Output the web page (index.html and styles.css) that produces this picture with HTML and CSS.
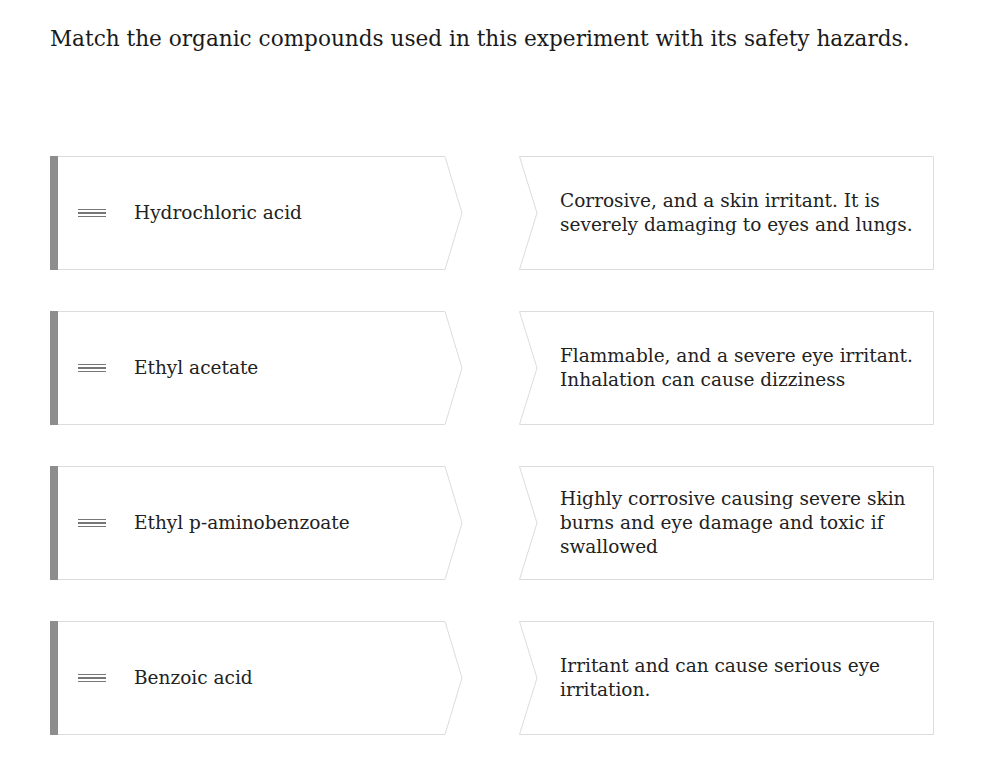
FILE: index.html
```html
<!DOCTYPE html>
<html lang="en">
<head>
  <meta charset="UTF-8">
  <title>Match the compounds</title>
  <link rel="stylesheet" href="styles.css">
</head>
<body>
  <div class="page">
    <h1 class="question">Match the organic compounds used in this experiment with its safety hazards.</h1>

    <div class="match-grid">
      <div class="term">
        <svg class="shape" viewBox="0 0 413 114" preserveAspectRatio="none">
          <polygon points="0.5,0.5 395,0.5 412,57 395,113.5 0.5,113.5" fill="#fff" stroke="#dcdcdc" />
          <rect x="0" y="0" width="8" height="114" fill="#8d8d8d" />
        </svg>
        <span class="handle"><i></i><i></i><i></i></span>
        <span class="label">Hydrochloric acid</span>
      </div>
      <div class="answer">
        <svg class="shape" viewBox="0 0 415 114" preserveAspectRatio="none">
          <polygon points="0.5,0.5 414.5,0.5 414.5,113.5 0.5,113.5 18,57" fill="#fff" stroke="#dcdcdc" />
        </svg>
        <span class="label">Corrosive, and a skin irritant. It is severely damaging to eyes and lungs.</span>
      </div>

      <div class="term">
        <svg class="shape" viewBox="0 0 413 114" preserveAspectRatio="none">
          <polygon points="0.5,0.5 395,0.5 412,57 395,113.5 0.5,113.5" fill="#fff" stroke="#dcdcdc" />
          <rect x="0" y="0" width="8" height="114" fill="#8d8d8d" />
        </svg>
        <span class="handle"><i></i><i></i><i></i></span>
        <span class="label">Ethyl acetate</span>
      </div>
      <div class="answer">
        <svg class="shape" viewBox="0 0 415 114" preserveAspectRatio="none">
          <polygon points="0.5,0.5 414.5,0.5 414.5,113.5 0.5,113.5 18,57" fill="#fff" stroke="#dcdcdc" />
        </svg>
        <span class="label">Flammable, and a severe eye irritant. Inhalation can cause dizziness</span>
      </div>

      <div class="term">
        <svg class="shape" viewBox="0 0 413 114" preserveAspectRatio="none">
          <polygon points="0.5,0.5 395,0.5 412,57 395,113.5 0.5,113.5" fill="#fff" stroke="#dcdcdc" />
          <rect x="0" y="0" width="8" height="114" fill="#8d8d8d" />
        </svg>
        <span class="handle"><i></i><i></i><i></i></span>
        <span class="label">Ethyl p-aminobenzoate</span>
      </div>
      <div class="answer">
        <svg class="shape" viewBox="0 0 415 114" preserveAspectRatio="none">
          <polygon points="0.5,0.5 414.5,0.5 414.5,113.5 0.5,113.5 18,57" fill="#fff" stroke="#dcdcdc" />
        </svg>
        <span class="label">Highly corrosive causing severe skin burns and eye damage and toxic if swallowed</span>
      </div>

      <div class="term">
        <svg class="shape" viewBox="0 0 413 114" preserveAspectRatio="none">
          <polygon points="0.5,0.5 395,0.5 412,57 395,113.5 0.5,113.5" fill="#fff" stroke="#dcdcdc" />
          <rect x="0" y="0" width="8" height="114" fill="#8d8d8d" />
        </svg>
        <span class="handle"><i></i><i></i><i></i></span>
        <span class="label">Benzoic acid</span>
      </div>
      <div class="answer">
        <svg class="shape" viewBox="0 0 415 114" preserveAspectRatio="none">
          <polygon points="0.5,0.5 414.5,0.5 414.5,113.5 0.5,113.5 18,57" fill="#fff" stroke="#dcdcdc" />
        </svg>
        <span class="label">Irritant and can cause serious eye irritation.</span>
      </div>
    </div>
  </div>
</body>
</html>
```

FILE: styles.css
```css
body {
  margin: 0;
  background-color: #fff;
  color: #222;
  font-family: "DejaVu Serif", "Liberation Serif", serif;
}

.page {
  padding: 24px 50px 0 50px;
}

.question {
  margin: 0;
  font-size: 21.6px;
  font-weight: normal;
  line-height: 30px;
  color: #1a1a1a;
}

.match-grid {
  margin-top: 102px;
  display: grid;
  grid-template-columns: 413px 415px;
  grid-auto-rows: 114px;
  column-gap: 56px;
  row-gap: 41px;
}

.term, .answer {
  position: relative;
  display: flex;
  align-items: center;
}

.shape {
  position: absolute;
  top: 0;
  left: 0;
  width: 100%;
  height: 100%;
}

.term .label, .answer .label, .handle {
  position: relative;
}

.handle {
  display: flex;
  flex-direction: column;
  gap: 2px;
  width: 28px;
  margin-left: 28px;
  margin-right: 28px;
}

.handle i {
  display: block;
  height: 1.5px;
  background-color: #777;
}

.label {
  font-size: 18.5px;
  line-height: 24px;
  color: #222;
}

.answer .label {
  padding-left: 41px;
  padding-right: 12px;
}
```
